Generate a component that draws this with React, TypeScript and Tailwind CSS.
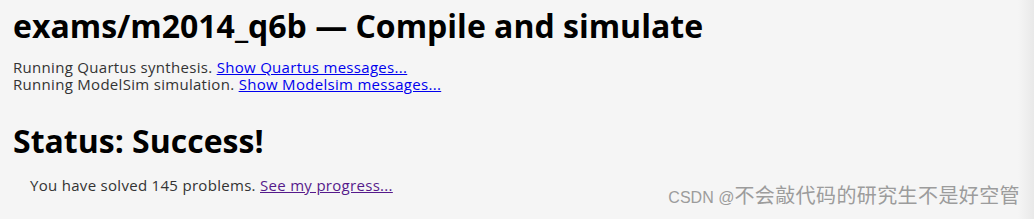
export default function App() {
  const body = "font-['Open_Sans',sans-serif] text-[15px] leading-[17px] tracking-[0.3px] text-[#333]";
  return (
    <div className="relative h-[219px] w-full overflow-hidden bg-[linear-gradient(to_right,#f5f5f5_calc(100%-16px),#e9e9e9)]">
      <div className="px-[13px] pt-[6px]">
        <h1 className="font-['Open_Sans',sans-serif] text-[32px] font-bold leading-[40px] text-black">
          exams/m2014_q6b — Compile and simulate
        </h1>
        <div className={"mt-[13px] " + body}>
          <div>
            Running Quartus synthesis. <a href="#" className="text-[#0000ee] underline">Show Quartus messages...</a>
          </div>
          <div>
            Running ModelSim simulation. <a href="#" className="text-[#0000ee] underline">Show Modelsim messages...</a>
          </div>
        </div>
        <h2 className="mt-[28px] font-['Open_Sans',sans-serif] text-[32px] font-bold leading-[40px] text-black">
          Status: Success!
        </h2>
        <p className={"mt-[16px] pl-[17px] " + body}>
          You have solved 145 problems. <a href="#" className="text-[#551a8b] underline">See my progress...</a>
        </p>
      </div>
      <div className="absolute bottom-[10px] right-[14px] flex items-baseline font-['Liberation_Sans','Noto_Sans_CJK_SC',sans-serif] leading-[22px] text-[#9c9c9c]">
        <span className="text-[16px]">CSDN @</span>
        <span className="text-[20px] tracking-[0.4px]">不会敲代码的研究生不是好空管</span>
      </div>
    </div>
  );
}
